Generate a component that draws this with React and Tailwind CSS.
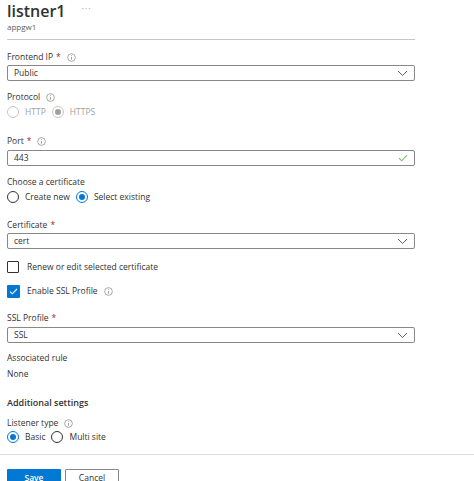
import { useState } from 'react'

const font = { fontFamily: '"Open Sans", "Noto Sans", sans-serif' }

const Info = () => (
  <svg width="9" height="9" viewBox="0 0 10 10" className="inline-block ml-[6px] text-[#8a8886]">
    <circle cx="5" cy="5" r="4.3" fill="none" stroke="currentColor" strokeWidth="0.8" />
    <line x1="5" y1="4.3" x2="5" y2="7.4" stroke="currentColor" strokeWidth="0.9" />
    <circle cx="5" cy="2.9" r="0.55" fill="currentColor" />
  </svg>
)

const Label = ({ children, required, info, className = '' }) => (
  <div className={`flex items-center h-[12px] text-[8.5px] leading-[12px] text-[#323130] ${className}`}>
    <span>{children}</span>
    {required && <span className="text-[#a4262c] ml-[3px]">*</span>}
    {info && <Info />}
  </div>
)

const Chevron = () => (
  <svg width="11" height="7" viewBox="0 0 11 7" className="text-[#605e5c]">
    <path d="M1 1l4.5 4.5L10 1" fill="none" stroke="currentColor" strokeWidth="1" />
  </svg>
)

const Select = ({ value, className = '' }) => (
  <div className={`flex items-center justify-between w-[408px] h-[16px] border border-[#8a8886] rounded-[2px] pl-[6px] pr-[6px] text-[8.5px] text-[#323130] ${className}`}>
    <span>{value}</span>
    <Chevron />
  </div>
)

const Radio = ({ checked, disabled, label }) => (
  <div className="flex items-center mr-[6px]">
    <span
      className={`flex items-center justify-center w-[12px] h-[12px] rounded-full border ${
        disabled ? 'border-[#c8c6c4]' : checked ? 'border-[#0078d4]' : 'border-[#323130]'
      }`}
    >
      {checked && <span className={`w-[6px] h-[6px] rounded-full ${disabled ? 'bg-[#a19f9d]' : 'bg-[#0078d4]'}`} />}
    </span>
    <span className={`ml-[6px] text-[8.5px] ${disabled ? 'text-[#a19f9d]' : 'text-[#323130]'}`}>{label}</span>
  </div>
)

export default function App() {
  const [port] = useState('443')

  return (
    <div className="w-[474px] h-[481px] overflow-hidden bg-white" style={font}>
      <div className="pl-[7px]">
        <div className="flex items-center h-[22px]">
          <span className="text-[16px] leading-[22px] font-semibold text-[#323130]">listner1</span>
          <span className="ml-[16px] text-[9px] text-[#a19f9d] tracking-[1px] -mt-[4px]">···</span>
        </div>
        <div className="text-[8px] leading-[10px] text-[#605e5c]">appgw1</div>
        <div className="mt-[7px] w-[408px] h-px bg-[#c8c6c4]" />

        <Label required info className="mt-[11px]">Frontend IP</Label>
        <Select value="Public" className="mt-[2px]" />

        <Label info className="mt-[10px]">Protocol</Label>
        <div className="flex items-center mt-[3px] h-[12px]">
          <Radio disabled label="HTTP" />
          <Radio disabled checked label="HTTPS" />
        </div>

        <Label required info className="mt-[17px]">Port</Label>
        <div className="mt-[3px] flex items-center justify-between w-[408px] h-[16px] border border-[#8a8886] rounded-[2px] pl-[6px] pr-[6px] text-[8.5px] text-[#323130]">
          <span>{port}</span>
          <svg width="10" height="8" viewBox="0 0 10 8">
            <path d="M1 4.2l2.7 2.6L9 1.2" fill="none" stroke="#7fba7a" strokeWidth="1.1" />
          </svg>
        </div>

        <Label className="mt-[10px]">Choose a certificate</Label>
        <div className="flex items-center mt-[3px] h-[12px]">
          <Radio label="Create new" />
          <Radio checked label="Select existing" />
        </div>

        <Label required className="mt-[16px]">Certificate</Label>
        <Select value="cert" className="mt-[2px]" />

        <div className="flex items-center mt-[12px] h-[12px]">
          <span className="w-[12px] h-[12px] border border-[#323130] rounded-[1px]" />
          <span className="ml-[8px] text-[8.5px] text-[#323130]">Renew or edit selected certificate</span>
        </div>

        <div className="flex items-center mt-[11px] h-[14px]">
          <span className="flex items-center justify-center w-[13px] h-[13px] bg-[#0078d4] rounded-[1px]">
            <svg width="9" height="7" viewBox="0 0 9 7">
              <path d="M1 3.6l2.3 2.2L8 1" fill="none" stroke="white" strokeWidth="1.1" />
            </svg>
          </span>
          <span className="ml-[7px] text-[8.5px] text-[#323130]">Enable SSL Profile</span>
          <Info />
        </div>

        <Label required className="mt-[14px]">SSL Profile</Label>
        <Select value="SSL" className="mt-[3px]" />

        <Label className="mt-[9px]">Associated rule</Label>
        <div className="mt-[4px] h-[12px] text-[8.5px] leading-[12px] text-[#323130]">None</div>

        <div className="mt-[16px] h-[14px] text-[9px] leading-[14px] font-semibold text-[#323130]">Additional settings</div>
        <Label info className="mt-[7px]">Listener type</Label>
        <div className="flex items-center mt-[2px] h-[12px]">
          <Radio checked label="Basic" />
          <Radio label="Multi site" />
        </div>
      </div>

      <div className="mt-[11px] h-px bg-[#e1dfdd]" />

      <div className="flex items-center gap-[4px] pl-[7px] mt-[14px]">
        <button className="w-[54px] h-[18px] bg-[#0078d4] text-white text-[8.5px] font-semibold rounded-[1px]">Save</button>
        <button className="w-[54px] h-[18px] bg-white border border-[#8a8886] text-[#323130] text-[8.5px] rounded-[1px]">Cancel</button>
      </div>
    </div>
  )
}
